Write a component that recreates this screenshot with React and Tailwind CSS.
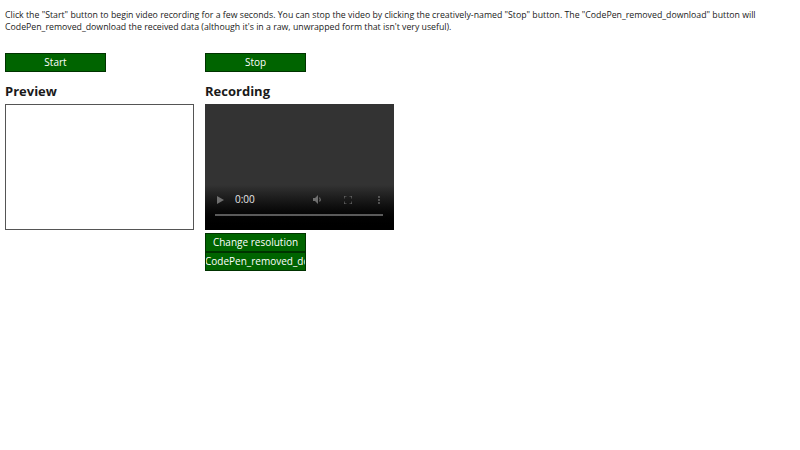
import React from 'react'

const font = { fontFamily: '"Open Sans", "Liberation Sans", sans-serif' }

function GreenButton({ children, className = '' }) {
  return (
    <button
      className={
        'block w-[101px] h-[19px] bg-[#006400] border border-[#003300] text-white text-[10px] leading-[17px] text-center overflow-hidden whitespace-nowrap ' +
        className
      }
    >
      {children}
    </button>
  )
}

function FakeVideo() {
  return (
    <div className="relative w-[189px] h-[126px] bg-[#333333]">
      <div className="absolute inset-x-0 bottom-0 h-[45px] bg-gradient-to-b from-[#333333] to-black" />
      <div className="absolute left-[12px] right-[14px] bottom-[23px] flex items-center text-[#cfcfcf]">
        <svg width="7" height="8" viewBox="0 0 7 8">
          <path d="M0 0 L7 4 L0 8 Z" fill="#6f6f6f" />
        </svg>
        <span className="ml-[11px] text-[10px] text-[#e8e8e8]">0:00</span>
        <div className="flex-1" />
        <svg width="10" height="9" viewBox="0 0 10 9" className="mr-[21px]">
          <path d="M0 3 H2 L5 0 V9 L2 6 H0 Z" fill="#6f6f6f" />
          <path d="M6.5 2.5 Q8 4.5 6.5 6.5" stroke="#6f6f6f" strokeWidth="1.2" fill="none" />
        </svg>
        <svg width="8" height="8" viewBox="0 0 8 8" className="mr-[26px]">
          <path d="M0 2.5 V0 H2.5 M5.5 0 H8 V2.5 M8 5.5 V8 H5.5 M2.5 8 H0 V5.5" stroke="#6f6f6f" strokeWidth="1.2" fill="none" />
        </svg>
        <svg width="2" height="8" viewBox="0 0 2 8">
          <circle cx="1" cy="1" r="0.9" fill="#6f6f6f" />
          <circle cx="1" cy="4" r="0.9" fill="#6f6f6f" />
          <circle cx="1" cy="7" r="0.9" fill="#6f6f6f" />
        </svg>
      </div>
      <div className="absolute left-[10px] right-[11px] bottom-[14px] h-[2px] bg-[#5a5a5a]" />
    </div>
  )
}

export default function App() {
  return (
    <div className="w-[800px] h-[450px] bg-white p-[5px] text-[#1a1a1a]" style={font}>
      <p className="text-[8.75px] leading-[12px] pt-[4px] w-[790px]">
        Click the "Start" button to begin video recording for a few seconds. You can stop the video by clicking the
        creatively-named "Stop" button. The "CodePen_removed_download" button will CodePen_removed_download the received
        data (although it's in a raw, unwrapped form that isn't very useful).
      </p>
      <div className="flex mt-[20px]">
        <div className="w-[200px]">
          <GreenButton>Start</GreenButton>
          <h2 className="text-[13px] font-bold leading-[19px] mt-[10px] mb-[3px]">Preview</h2>
          <div className="w-[189px] h-[126px] border border-[#555555]" />
        </div>
        <div className="w-[200px]">
          <GreenButton>Stop</GreenButton>
          <h2 className="text-[13px] font-bold leading-[19px] mt-[10px] mb-[3px]">Recording</h2>
          <FakeVideo />
          <GreenButton className="mt-[3px]">Change resolution</GreenButton>
          <GreenButton className="text-left -indent-[1px]">CodePen_removed_download</GreenButton>
        </div>
      </div>
    </div>
  )
}
